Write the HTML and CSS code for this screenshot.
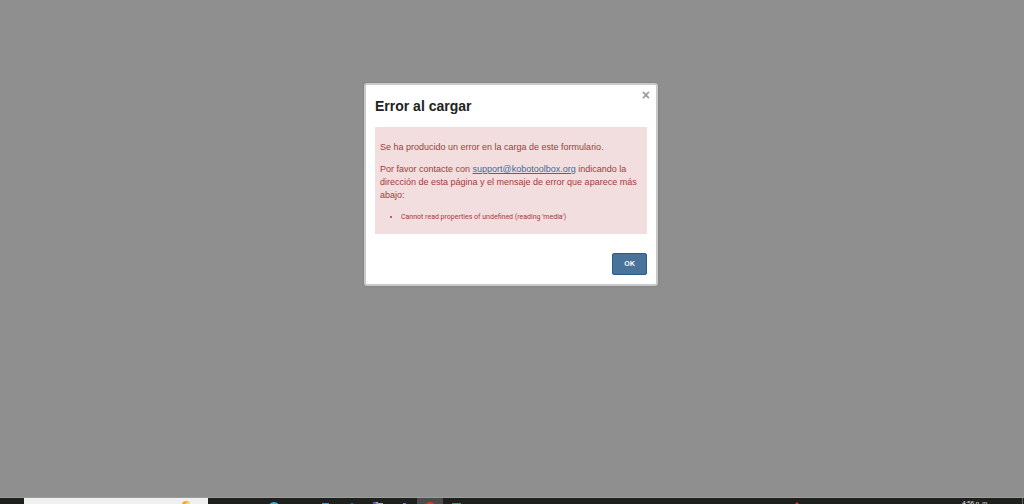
FILE: index.html
```
<!DOCTYPE html>
<html lang="es">
<head>
	<meta charset="utf-8">
	<title>Error al cargar</title>
	<link rel="stylesheet" href="styles.css">
</head>
<body>
	<main class="overlay">
		<div class="dialog" role="dialog" aria-labelledby="dialog-title">
			<button class="close" type="button" aria-label="Cerrar">×</button>
			<h1 class="title" id="dialog-title">Error al cargar</h1>
			<div class="alert">
				<p>Se ha producido un error en la carga de este formulario.</p>
				<p>Por favor contacte con <a href="mailto:support@kobotoolbox.org">support@kobotoolbox.org</a> indicando la dirección de esta página y el mensaje de error que aparece más abajo:</p>
				<ul class="errors">
					<li>Cannot read properties of undefined (reading 'media')</li>
				</ul>
			</div>
			<div class="actions">
				<button class="ok" type="button">OK</button>
			</div>
		</div>
	</main>
	<footer class="taskbar">
		<div class="search">
			<svg width="10" height="6" viewBox="0 0 10 6"><circle cx="5" cy="7" r="4" fill="#f5a623"/><path d="M5 4l4 1v1H5z" fill="#ffd873"/></svg>
		</div>
		<div class="apps">
			<span class="app"><svg width="14" height="6" viewBox="0 0 14 6"><circle cx="7" cy="10" r="6" fill="#35b8cc"/></svg></span>
			<span class="app"></span>
			<span class="app"><svg width="8" height="6" viewBox="0 0 8 6"><path d="M0 5h7v1H0z" fill="#2ba3e0"/></svg></span>
			<span class="app"><svg width="6" height="6" viewBox="0 0 6 6"><path d="M1 6l2-1 2 1z" fill="#1f6fc0"/></svg></span>
			<span class="app"><svg width="10" height="6" viewBox="0 0 10 6"><path d="M0 4h5v1h5v1H0z" fill="#a9a7b5"/><path d="M0 4h2l2 2H0z" fill="#5a4fb0"/></svg></span>
			<span class="app"><svg width="6" height="6" viewBox="0 0 6 6"><path d="M2 5h3v1H2z" fill="#8277cf"/></svg></span>
			<span class="app active"><svg width="10" height="6" viewBox="0 0 10 6"><circle cx="5" cy="9" r="5" fill="#d9392b"/></svg></span>
			<span class="app"><svg width="10" height="6" viewBox="0 0 10 6"><path d="M1 5h9v1H1z" fill="#2f9c68"/></svg></span>
		</div>
		<div class="tray">
			<svg width="6" height="6" viewBox="0 0 6 6"><path d="M3 4l2 2H1z" fill="#e2322d"/></svg>
			<span class="clock">4:56 p. m.</span>
		</div>
	</footer>
</body>
</html>
```
FILE: styles.css
```
* {
	box-sizing: border-box;
}
body {
	margin: 0;
	height: 100vh;
	display: flex;
	flex-direction: column;
	background-color: #8f8f8f;
	font-family: "Liberation Sans", Arial, sans-serif;
	font-size: 9px;
	line-height: 13px;
}
.overlay {
	flex: 1;
	padding: 83px 2px 0 0;
	border-bottom: 1px solid #9c9c9c;
}
.dialog {
	position: relative;
	width: 294px;
	max-width: 100%;
	margin: 0 auto;
	padding: 14px 9px 9px;
	background-color: #fff;
	border: 2px solid #c8caca;
	border-radius: 3px;
	box-shadow: 0 0 2px #777;
}
.close {
	position: absolute;
	top: 3px;
	right: 6px;
	padding: 0;
	border: 0;
	background: none;
	color: #999;
	font: bold 14px/14px "Liberation Sans", Arial, sans-serif;
}
.title {
	margin: 0 0 14px;
	color: #222;
	font-size: 14px;
	line-height: 14px;
}
.alert {
	padding: 14px 5px 10px;
	background-color: #f2dede;
	color: #a33a3c;
}
.alert p {
	margin: 0 0 9px;
}
.alert a {
	color: #3b6c9c;
}
.errors {
	margin: 0;
	padding-left: 21px;
	font-family: Roboto, sans-serif;
	font-size: 7px;
}
.actions {
	display: flex;
	justify-content: flex-end;
	margin-top: 19px;
}
.ok {
	width: 35px;
	height: 22px;
	padding: 0;
	border: 1px solid #2d5b88;
	border-radius: 2px;
	background-color: #4a7399;
	color: #fff;
	font: 500 8px/20px Roboto, sans-serif;
}
.taskbar {
	display: flex;
	height: 6px;
	padding-left: 24px;
	overflow: hidden;
	background-color: #1e201e;
}
.taskbar svg {
	display: block;
}
.search {
	width: 184px;
	padding-left: 157px;
	background-color: #f1f0f0;
}
.apps {
	display: flex;
	margin-left: 53px;
}
.app {
	display: flex;
	justify-content: center;
	width: 26px;
}
.active {
	background-color: #4b4b4b;
}
.tray {
	display: flex;
	justify-content: space-between;
	width: 229px;
	margin-left: auto;
	margin-right: 1px;
	padding-right: 33px;
	border-right: 1px solid #666;
}
.clock {
	padding-top: 2px;
	color: #eee;
	font-size: 6px;
	line-height: 6px;
}
```
